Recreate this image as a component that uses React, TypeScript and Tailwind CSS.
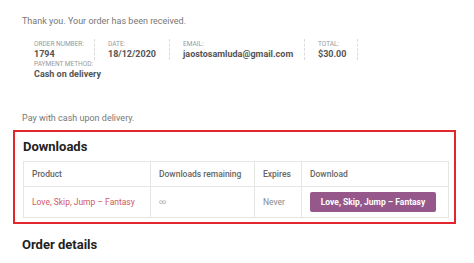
import React from 'react'

const overview = [
  { label: 'Order number:', value: '1794', w: 'w-[61px]' },
  { label: 'Date:', value: '18/12/2020', w: 'w-[62px]' },
  { label: 'Email:', value: 'jaostosamluda@gmail.com', w: 'w-[122px]' },
  { label: 'Total:', value: '$30.00', w: 'w-[40px]' },
]

const cell = 'border border-[#e6e6e6] pl-[8px] text-left whitespace-nowrap'

export default function App() {
  return (
    <div className="w-[474px] h-[263px] overflow-hidden bg-white font-['Roboto',sans-serif]">
      <div className="pl-[22px] pt-[13px]">
        <p className="text-[9px] leading-[16px] text-[#777]">Thank you. Your order has been received.</p>

        <ul className="mt-[10px] ml-[12px] flex flex-wrap w-[360px]">
          {overview.map((item, i) => (
            <li
              key={item.label}
              className={`${item.w} border-r border-dashed border-[#ddd] ${i > 0 ? 'ml-[13px]' : ''} py-[1px]`}
            >
              <div className="text-[6.5px] leading-[9px] uppercase text-[#999]">{item.label}</div>
              <div className="text-[9px] leading-[10px] font-bold text-[#555] whitespace-nowrap">{item.value}</div>
            </li>
          ))}
          <li className="w-full">
            <div className="text-[6.5px] leading-[9px] uppercase text-[#999]">Payment method:</div>
            <div className="text-[9px] leading-[10px] font-bold text-[#555]">Cash on delivery</div>
          </li>
        </ul>

        <p className="mt-[31px] text-[9px] leading-[16px] text-[#777]">Pay with cash upon delivery.</p>
      </div>

      <section className="ml-[13px] mt-[4px] w-[443px] h-[94px] border-2 border-[#e3262e] pl-[8px] pt-[6px]">
        <h2 className="text-[13px] leading-[18px] font-bold text-[#222]">Downloads</h2>
        <table className="mt-[5px] w-[426px] table-fixed border-collapse text-[8.5px] text-[#666]">
          <colgroup>
            <col className="w-[127px]" />
            <col className="w-[104px]" />
            <col className="w-[47px]" />
            <col />
          </colgroup>
          <thead>
            <tr className="h-[25px]">
              <th className={`${cell} font-medium`}>Product</th>
              <th className={`${cell} font-medium`}>Downloads remaining</th>
              <th className={`${cell} font-medium`}>Expires</th>
              <th className={`${cell} font-medium`}>Download</th>
            </tr>
          </thead>
          <tbody>
            <tr className="h-[31px]">
              <td className={`${cell} text-[#cf5a63]`}>Love, Skip, Jump – Fantasy</td>
              <td className={`${cell} text-[7px] text-[#999]`}>∞</td>
              <td className={`${cell} text-[#888]`}>Never</td>
              <td className={cell}>
                <span className="inline-flex items-center justify-center w-[126px] h-[20px] rounded-[2px] bg-[#96588a] text-white font-bold text-[8.5px] align-middle">
                  Love, Skip, Jump – Fantasy
                </span>
              </td>
            </tr>
          </tbody>
        </table>
      </section>

      <h2 className="ml-[22px] mt-[12px] text-[13px] leading-[18px] font-bold text-[#222]">Order details</h2>
    </div>
  )
}
